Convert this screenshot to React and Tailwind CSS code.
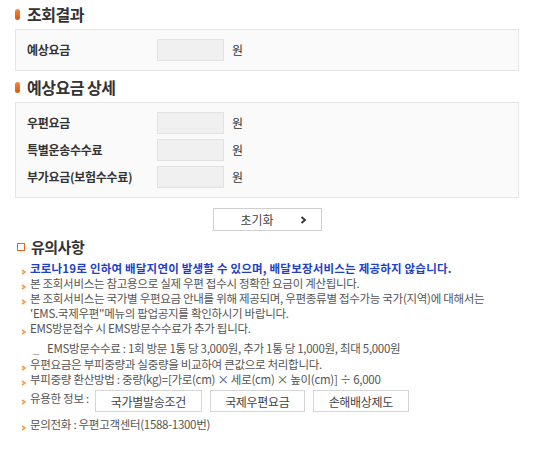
import React from 'react';

const font = { fontFamily: '"Noto Sans CJK KR", "Noto Sans", sans-serif' };

// orange pill used before the section titles
const TitleMark = () => (
  <span className="inline-block w-[5px] h-[11px] rounded-full bg-gradient-to-b from-[#f08a3c] to-[#d8550f] mr-[7px]" />
);

const SectionTitle = ({ children }) => (
  <h3 className="flex items-center h-[20px] text-[16px] font-bold text-[#333] tracking-[-0.5px]">
    <TitleMark />
    {children}
  </h3>
);

const FeeRow = ({ label }) => (
  <div className="flex items-center h-[22px]">
    <span className="w-[130px] text-[12px] font-bold text-[#333] tracking-[-0.3px]">{label}</span>
    <input
      readOnly
      className="w-[67px] h-[22px] bg-[#f0f0f0] border border-[#e2e2e2] outline-none"
    />
    <span className="ml-[8px] text-[12px] text-[#333]">원</span>
  </div>
);

const Bullet = () => (
  <svg width="6" height="6" viewBox="0 0 6 6" className="absolute left-[6px] top-[8px]">
    <path d="M1 1 L4 3 L1 5" fill="none" stroke="#f0a050" strokeWidth="1.6" />
  </svg>
);

const Note = ({ children, className = '' }) => (
  <li className={`relative pl-[15px] ${className}`}>
    <Bullet />
    {children}
  </li>
);

const LinkButton = ({ children, width }) => (
  <button className={`h-[22px] ${width} border border-[#d5d5d5] bg-white text-[12px] text-[#444]`}>
    {children}
  </button>
);

export default function App() {
  return (
    <div className="bg-white w-[536px] h-[472px] pt-[4px]" style={font}>
      <div className="ml-[15px] w-[504px]">
        <SectionTitle>조회결과</SectionTitle>

        <div className="mt-[5px] h-[42px] flex items-center pl-[11px] bg-[#fafafa] border border-[#e6e6e6]">
          <FeeRow label="예상요금" />
        </div>

        <div className="mt-[6px]">
          <SectionTitle>예상요금 상세</SectionTitle>
        </div>

        <div className="mt-[5px] h-[96px] flex flex-col justify-center gap-[5px] pl-[11px] bg-[#fafafa] border border-[#e6e6e6]">
          <FeeRow label="우편요금" />
          <FeeRow label="특별운송수수료" />
          <FeeRow label="부가요금(보험수수료)" />
        </div>

        <div className="flex justify-center mt-[10px]">
          <button className="relative w-[109px] h-[23px] border border-[#cfcfcf] bg-white text-[12px] text-[#444]">
            <span className="mr-[20px]">초기화</span>
            <svg width="7" height="8" viewBox="0 0 7 8" className="absolute right-[14px] top-[7px]">
              <path d="M1.5 1 L5 4 L1.5 7" fill="none" stroke="#333" strokeWidth="1.8" />
            </svg>
          </button>
        </div>

        <h3 className="flex items-center mt-[6px] h-[20px] text-[15px] font-bold text-[#333] tracking-[-0.5px]">
          <span className="inline-block w-[8px] h-[8px] border-[1.5px] border-[#e8641b] ml-[2px] mr-[6px]" />
          유의사항
        </h3>

        <ul className="mt-[4px] text-[11.5px] leading-[15px] text-[#555] tracking-[-0.3px] whitespace-nowrap">
          <Note className="font-bold text-[#1f3fc8] tracking-[0.2px]">
            코로나19로 인하여 배달지연이 발생할 수 있으며, 배달보장서비스는 제공하지 않습니다.
          </Note>
          <Note>본 조회서비스는 참고용으로 실제 우편 접수시 정확한 요금이 계산됩니다.</Note>
          <Note>
            본 조회서비스는 국가별 우편요금 안내를 위해 제공되며, 우편종류별 접수가능 국가(지역)에 대해서는
            <br />
            'EMS.국제우편"메뉴의 팝업공지를 확인하시기 바랍니다.
          </Note>
          <Note>
            EMS방문접수 시 EMS방문수수료가 추가 됩니다.
            <div className="flex mt-[5px] mb-[1px]">
              <span className="w-[17px] pl-[3px] text-[#999]">_</span>
              EMS방문수수료 : 1회 방문 1통 당 3,000원, 추가 1통 당 1,000원, 최대 5,000원
            </div>
          </Note>
          <Note>우편요금은 부피중량과 실중량을 비교하여 큰값으로 처리합니다.</Note>
          <Note>부피중량 환산방법 : 중량(kg)=[가로(cm) × 세로(cm) × 높이(cm)] ÷ 6,000</Note>
          <Note className="mt-[4px]">
            <div className="flex items-start gap-[8px]">
              <span className="mr-[-2px]">유용한 정보 :</span>
              <div className="flex gap-[8px] mt-[-1px]">
                <LinkButton width="w-[107px]">국가별발송조건</LinkButton>
                <LinkButton width="w-[95px]">국제우편요금</LinkButton>
                <LinkButton width="w-[96px]">손해배상제도</LinkButton>
              </div>
            </div>
          </Note>
          <Note className="mt-[5px]">문의전화 : 우편고객센터(1588-1300번)</Note>
        </ul>
      </div>
    </div>
  );
}
